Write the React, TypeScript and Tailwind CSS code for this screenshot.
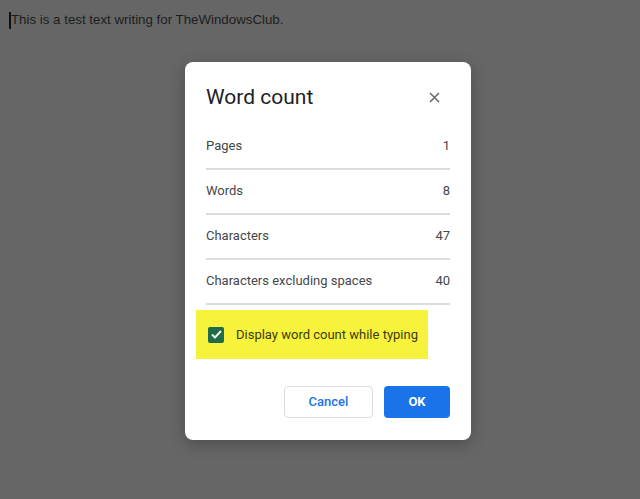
import { useState } from 'react';

const stats = [
  { label: 'Pages', value: '1' },
  { label: 'Words', value: '8' },
  { label: 'Characters', value: '47' },
  { label: 'Characters excluding spaces', value: '40' },
];

export default function App() {
  const [showWhileTyping, setShowWhileTyping] = useState(true);

  return (
    <div className="relative h-[499px] w-[640px] overflow-hidden bg-[#666666] font-['Roboto',sans-serif]">
      {/* document text under the overlay */}
      <div className="flex items-center pl-[9px] pt-[11px] font-['Liberation_Sans',Arial,sans-serif] text-[13.3px] leading-[18px] text-[#1d1d1d]">
        <span className="h-[17px] w-[2px] bg-[#111]" />
        <span>This is a test text writing for TheWindowsClub.</span>
      </div>

      <div className="flex justify-center pt-[33px]">
        <div className="ml-[16px] flex h-[378px] w-[286px] flex-col rounded-[8px] bg-white px-[21px] shadow-[0_4px_16px_rgba(0,0,0,0.25)]">
          <div className="flex items-center justify-between pt-[22px]">
            <h1 className="text-[21px] leading-[26px] text-[#202124]">Word count</h1>
            <svg width="11" height="11" viewBox="0 0 11 11" className="mr-[10px]">
              <path d="M1 1L10 10M10 1L1 10" stroke="#6b6b6b" strokeWidth="1.6" />
            </svg>
          </div>

          <div className="mt-[15px]">
            {stats.map((s) => (
              <div
                key={s.label}
                className="flex h-[45px] items-center justify-between border-b-2 border-[#dadce0] pb-[2px] text-[13px] text-[#44474b]"
              >
                <span>{s.label}</span>
                <span>{s.value}</span>
              </div>
            ))}
          </div>

          <label className="-ml-[10px] mt-[5px] flex h-[49px] w-[232px] cursor-pointer items-center gap-[12px] bg-[#f7f23c] pl-[12px] text-[13px] text-[#3e3c14]">
            <span
              onClick={() => setShowWhileTyping(!showWhileTyping)}
              className="flex h-[16px] w-[16px] items-center justify-center rounded-[2px] bg-[#1e6b4d]"
            >
              {showWhileTyping && (
                <svg width="11" height="9" viewBox="0 0 11 9">
                  <path d="M1 4.5L4 7.5L10 1" stroke="#f4f5d8" strokeWidth="2" fill="none" />
                </svg>
              )}
            </span>
            <span>Display word count while typing</span>
          </label>

          <div className="mt-[27px] flex justify-end gap-[11px]">
            <button className="h-[32px] w-[89px] rounded-[4px] border border-[#dadce0] text-[13px] font-medium text-[#1a73e8]">
              Cancel
            </button>
            <button className="h-[32px] w-[66px] rounded-[4px] bg-[#1a73e8] text-[13px] font-bold text-white">
              OK
            </button>
          </div>
        </div>
      </div>
    </div>
  );
}
